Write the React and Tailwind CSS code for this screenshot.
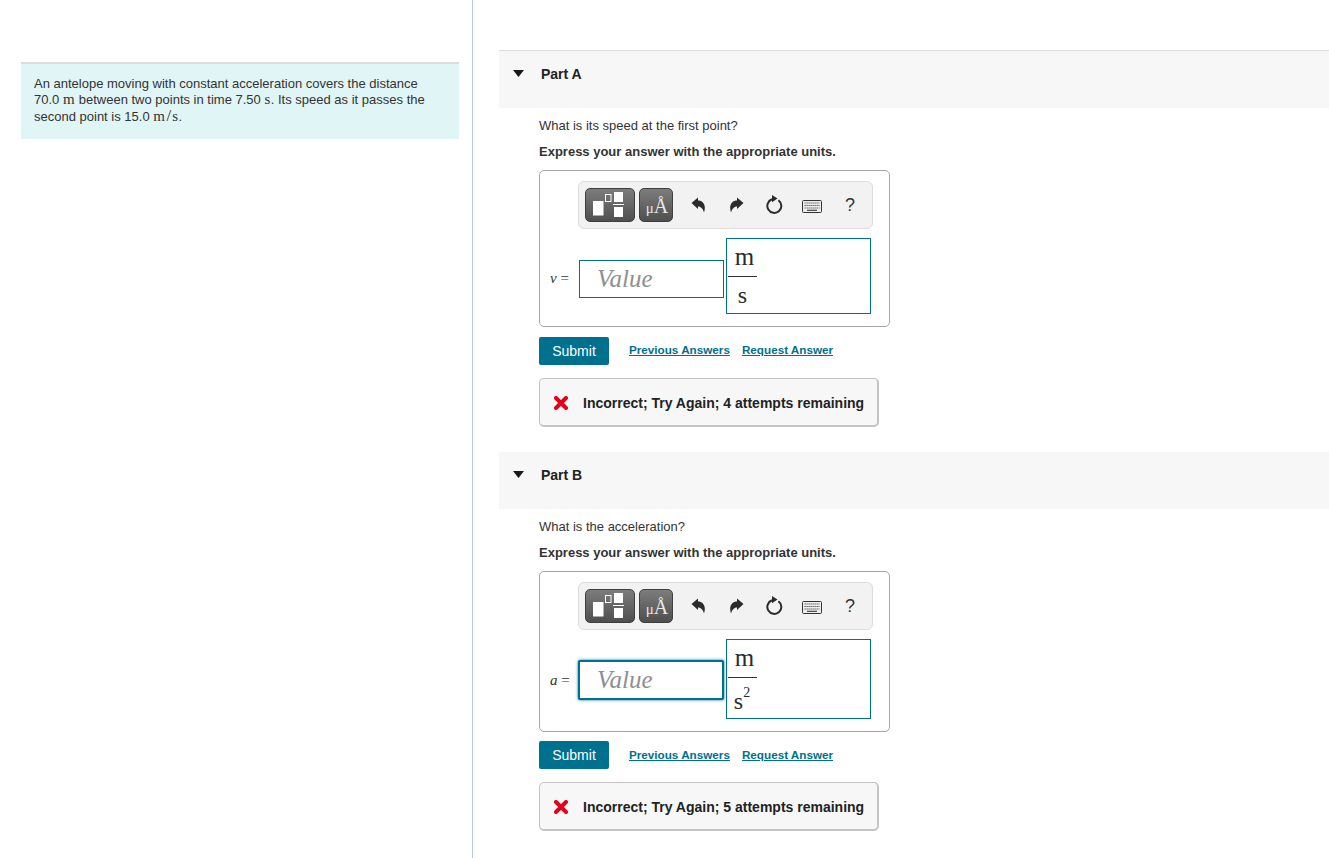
const sans = { fontFamily: '"Liberation Sans", Arial, sans-serif' };
const serif = { fontFamily: '"Liberation Serif", serif' };

function TemplateIcon() {
  return (
    <svg width="50" height="34" viewBox="0 0 50 34" className="block shrink-0">
      <rect x="8" y="13" width="10.5" height="14.5" fill="#fff" />
      <rect x="20.5" y="6.5" width="5.5" height="7" fill="none" stroke="#fff" strokeWidth="1" />
      <rect x="29" y="4" width="9" height="10" fill="#fff" />
      <rect x="28" y="16" width="11" height="1" fill="#fff" />
      <rect x="29" y="19" width="9" height="10" fill="#fff" />
    </svg>
  );
}

function DarkButton({ w, children }) {
  return (
    <div
      className={`${w} h-[34px] rounded-[5px] border border-[#3f3f3f] bg-gradient-to-b from-[#7d7d7d] to-[#4f4f4f] flex items-center justify-center overflow-hidden`}
    >
      {children}
    </div>
  );
}

function Undo({ flip }) {
  return (
    <svg width="15" height="16" viewBox="0 0 15 16" className={flip ? "-scale-x-100" : ""}>
      <path d="M0.5 6 L7 0.5 V3.5 C12 3.5 15.5 8 13 15.5 C12 12 10 9.5 7 9.5 V12 Z" fill="#2b2b2b" />
    </svg>
  );
}

function Reset() {
  return (
    <svg width="18" height="20" viewBox="0 0 18 20" className="-mt-[2px]">
      <path d="M13.4 6.2 A7 7 0 1 1 7 5.3" fill="none" stroke="#2b2b2b" strokeWidth="2" />
      <path d="M7 1 L12.5 4.6 L7 8.2 Z" fill="#2b2b2b" />
    </svg>
  );
}

function Keyboard() {
  return (
    <svg width="20" height="13" viewBox="0 0 20 13">
      <rect x="0.5" y="0.5" width="19" height="12" rx="1" fill="#eee" stroke="#333" />
      <path d="M2.5 3h15M2.5 5.5h15M2.5 8h15" stroke="#555" strokeWidth="1.2" strokeDasharray="1.3 0.7" />
      <path d="M5 10.3h10" stroke="#444" strokeWidth="1.2" />
    </svg>
  );
}

function Toolbar() {
  return (
    <div className="ml-[38px] w-[295px] h-[48px] rounded-[6px] border border-[#dcdcdc] bg-[#f2f2f2] flex items-center pl-[6px]">
      <div className="flex gap-[4px]">
        <DarkButton w="w-[50px]"><TemplateIcon /></DarkButton>
        <DarkButton w="w-[34px]">
          <span className="text-[#e8e8e8] leading-none pt-[2px] pl-[2px] flex items-baseline" style={serif}>
            <span className="text-[15px]">μ</span>
            <span className="text-[20px]">Å</span>
          </span>
        </DarkButton>
      </div>
      <div className="flex items-center ml-[17px]">
        <div className="w-[16px] flex justify-center"><Undo /></div>
        <div className="w-[16px] ml-[22px] flex justify-center"><Undo flip /></div>
        <div className="w-[18px] ml-[21px] flex justify-center"><Reset /></div>
        <div className="w-[20px] ml-[19px] flex justify-center pt-[2px]"><Keyboard /></div>
        <div className="ml-[23px] text-[18px] text-[#333] leading-none">?</div>
      </div>
    </div>
  );
}

function AnswerBox({ variable, focused, squared, unitsH, boxH }) {
  return (
    <div className={`w-[351px] ${boxH} rounded-[5px] border border-[#a6a6a6] pt-[10px] box-border`}>
      <Toolbar />
      <div className="flex items-start mt-[9px] pl-[10px]">
        <div className={`w-[29px] text-[15px] leading-[16px] text-[#333] whitespace-nowrap ${focused ? "mt-[33px]" : "mt-[32px]"}`} style={serif}>
          <i>{variable}</i> =
        </div>
        <div
          className={`bg-white flex items-center box-border ${
            focused
              ? "-ml-[1px] mt-[21px] w-[146px] h-[40px] pl-[17px] border-2 border-[#00708f] shadow-[0_0_3px_#00708f] rounded-[2px]"
              : "mt-[22px] w-[145px] h-[38px] pl-[17px] border border-[#00708f]"
          }`}
        >
          <span className="italic text-[25px] text-[#8f8f8f]" style={serif}>Value</span>
        </div>
        <div className={`ml-[2px] w-[145px] ${unitsH} border border-[#00708f] box-border pl-[1px] flex flex-col text-[#2b2b2b]`} style={serif}>
          <div className="w-[29px] h-[38px] shrink-0 flex items-center justify-center border-b border-[#333] text-[25px] leading-none pl-[4px] pb-[3px]">m</div>
          <div className={`w-[29px] flex-1 flex items-center justify-center text-[24px] leading-none ${squared ? "pt-[5px] pr-[1px]" : ""}`}>
            s{squared && <sup className="text-[14px] leading-none -mt-[2px]">2</sup>}
          </div>
        </div>
      </div>
    </div>
  );
}

function Part({ name, question, variable, focused, squared, attempts, boxH, unitsH, topBorder, mtButton, mtFeedback, linkOffset }) {
  return (
    <section>
      <div className={`bg-[#f7f7f7] pt-[15px] box-border ${topBorder ? "h-[58px] border-t border-[#dcdcdc]" : "h-[57px]"}`}>
        <div className="h-[16px] flex items-center">
          <svg width="11" height="7" viewBox="0 0 11 7" className="ml-[14px] -mt-[2px]">
            <path d="M0 0 H11 L5.5 7 Z" fill="#1a1a1a" />
          </svg>
          <div className="ml-[17px] text-[14px] leading-[16px] font-bold text-[#222]">{name}</div>
        </div>
      </div>
      <div className="pl-[40px]">
        <p className="text-[13px] leading-[16px] text-[#333] pt-[10px]">{question}</p>
        <p className="text-[13px] leading-[16px] font-bold text-[#333] mt-[10px]">Express your answer with the appropriate units.</p>
        <div className="mt-[10px]">
          <AnswerBox variable={variable} focused={focused} squared={squared} boxH={boxH} unitsH={unitsH} />
        </div>
        <div className={`flex items-center ${mtButton}`}>
          <div className="w-[70px] h-[28px] bg-[#00708f] rounded-[2px] flex items-center justify-center text-white text-[14px]">Submit</div>
          <a className={`ml-[20px] text-[11.7px] font-bold text-[#00708f] underline ${linkOffset}`}>Previous Answers</a>
          <a className={`ml-[12px] text-[11.7px] font-bold text-[#00708f] underline ${linkOffset}`}>Request Answer</a>
        </div>
        <div className={`w-[340px] h-[49px] ${mtFeedback} rounded-[5px] border border-[#c4c4c4] border-r-2 border-b-2 bg-[#f7f7f7] flex items-center box-border pl-[14px]`}>
          <svg width="14" height="14" viewBox="0 0 14 14" className="mt-[1px]">
            <path d="M2 2 L12 12 M12 2 L2 12" stroke="#e2001a" strokeWidth="4" strokeLinecap="round" />
          </svg>
          <span className="ml-[15px] mt-[2px] text-[14px] font-bold text-[#222] whitespace-nowrap">Incorrect; Try Again; {attempts} attempts remaining</span>
        </div>
      </div>
    </section>
  );
}

function M({ children }) {
  return <span className="text-[15px] leading-[0] tracking-[0.5px]" style={serif}>{children}</span>;
}

export default function App() {
  return (
    <div className="h-[858px] w-[1329px] overflow-hidden flex bg-white" style={sans}>
      <aside className="w-[473px] shrink-0 border-r border-[#b9cad8] pt-[62px] pl-[21px] box-border">
        <div className="w-[438px] h-[77px] bg-[#e0f5f6] border-t-2 border-[#dcdcdc] box-border pl-[13px] pt-[12px] text-[13px] leading-[16.4px] text-[#333]">
          An antelope moving with constant acceleration covers the distance
          <br />
          70.0 <M>m</M> between two points in time 7.50 <M>s</M>. Its speed as it passes the
          <br />
          second point is 15.0 <M>m</M><span className="text-[17px] leading-[0] mx-[1px]" style={serif}>/</span><M>s</M>.
        </div>
      </aside>
      <main className="flex-1 pl-[26px] pt-[50px]">
        <Part name="Part A" question="What is its speed at the first point?" variable="v" attempts={4} boxH="h-[157px]" unitsH="h-[76px]" topBorder mtButton="mt-[10px]" mtFeedback="mt-[13px]" linkOffset="-mt-[2px]" />
        <div className="h-[25px]" />
        <Part name="Part B" question="What is the acceleration?" variable="a" focused squared attempts={5} boxH="h-[161px]" unitsH="h-[80px]" mtButton="mt-[9px]" mtFeedback="mt-[13px]" linkOffset="mt-0" />
      </main>
    </div>
  );
}
